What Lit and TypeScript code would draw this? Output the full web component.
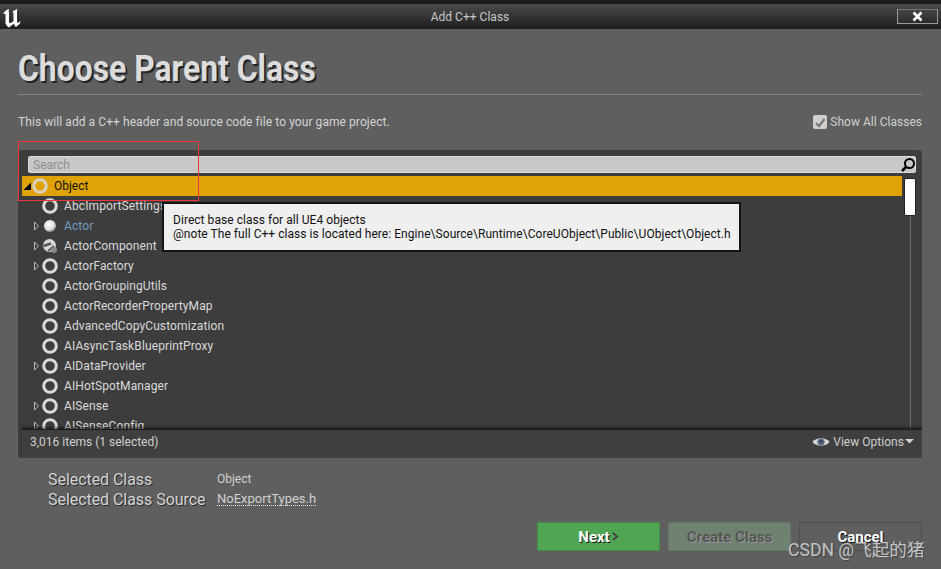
import { LitElement, html, css, svg } from "lit";
import { customElement } from "lit/decorators.js";

const ring = svg`<circle cx="8" cy="8" r="6.3" fill="none" stroke="#dadada" stroke-width="3"/>`;

const rows: { name: string; arrow?: boolean; icon?: string; blue?: boolean }[] = [
  { name: "AbcImportSettings" },
  { name: "Actor", arrow: true, icon: "ball", blue: true },
  { name: "ActorComponent", arrow: true, icon: "comp" },
  { name: "ActorFactory", arrow: true },
  { name: "ActorGroupingUtils" },
  { name: "ActorRecorderPropertyMap" },
  { name: "AdvancedCopyCustomization" },
  { name: "AIAsyncTaskBlueprintProxy" },
  { name: "AIDataProvider", arrow: true },
  { name: "AIHotSpotManager" },
  { name: "AISense", arrow: true },
  { name: "AISenseConfig", arrow: true },
];

@customElement("app-root")
export class AppRoot extends LitElement {
  static styles = css`
    :host {
      display: block;
      position: relative;
      width: 941px;
      height: 569px;
      overflow: hidden;
      background: #5f5f5f;
      font-family: Roboto, "Noto Sans CJK SC", sans-serif;
      font-size: 12px;
      color: #d6d6d6;
    }
    .titlebar {
      height: 29px;
      box-sizing: border-box;
      border-top: 4px solid #1b1b1b;
      background: linear-gradient(#4a4a4a, #1e1e1e);
      display: grid;
      grid-template-columns: 1fr auto 1fr;
      align-items: center;
    }
    .logo { margin: 2px 0 0 2px; display: block; }
    .title { color: #c8c8c8; font-size: 12px; margin-top: 1px; margin-left: -1px; letter-spacing: 0.02px; }
    .close {
      justify-self: end;
      width: 41px;
      height: 15px;
      margin: -1px 3px 0 0;
      box-sizing: border-box;
      border: 1px solid #9a9a9a;
      border-top-color: #777;
      background: linear-gradient(#444, #2c2c2c);
      display: flex;
      align-items: center;
      justify-content: center;
    }
    .content { padding: 0 19px 0 18px; }
    h1 {
      margin: 17px 0 0;
      height: 48px;
      font-size: 36px;
      line-height: 47px;
      font-weight: 700;
      color: #dcdcdc;
      text-shadow: 2px 2px 0 #222;
      transform-origin: left center;
      transform: scaleX(0.885);
      white-space: nowrap;
    }
    .rule { height: 1px; background: #858585; }
    .intro {
      display: flex;
      justify-content: space-between;
      align-items: center;
      height: 20px;
      margin-top: 17px;
      color: #d4d4d4;
    }
    .intro-text { letter-spacing: 0.07px; }
    .show { display: flex; align-items: center; gap: 3px; color: #cfcfcf; letter-spacing: 0.02px; }
    .check {
      width: 14px;
      height: 14px;
      border-radius: 2px;
      background: #cfcfcf;
      display: flex;
    }
    .panel {
      margin-top: 18px;
      height: 308px;
      background: #3d3d3d;
      border-radius: 3px;
      display: flex;
      flex-direction: column;
      overflow: hidden;
    }
    .search {
      margin: 6px 6px 0 10px;
      height: 17px;
      box-sizing: border-box;
      background: #c8c8c8;
      border: 1px solid #dcdcdc;
      border-radius: 2px;
      display: flex;
      align-items: center;
      justify-content: space-between;
      padding-left: 4px;
      color: #8f8f8f;
      font-size: 12px;
    }
    .search svg { margin-right: -1px; }
    .body {
      flex: 1;
      min-height: 0;
      display: flex;
      margin: 3px 6px 0 4px;
      gap: 2px;
      overflow: hidden;
    }
    .tree { flex: 1; min-width: 0; }
    .row {
      height: 20px;
      display: flex;
      align-items: center;
      color: #dadada;
      white-space: nowrap;
      letter-spacing: 0.11px;
    }
    .row.sel { background: #dfa307; color: #111; letter-spacing: 0; }
    .row.sel .arrow { margin-left: 1px; width: 9px; }
    .row.sel .icon { margin: 0 6px 0 0; }
    .row.blue { color: #6f9dc2; }
    .arrow { width: 12px; margin-left: 8px; height: 10px; display: block; flex: none; }
    .icon { width: 16px; height: 16px; margin: 0 6px 0 0; flex: none; display: block; }
    .scroll {
      width: 12px;
      margin-top: 2px;
      display: flex;
      flex-direction: column;
      align-items: center;
    }
    .thumb {
      width: 12px;
      height: 38px;
      box-sizing: border-box;
      background: #fff;
      border: 1px solid #222;
      border-radius: 2px;
      flex: none;
    }
    .track { flex: 1; width: 1px; background: #6a6a6a; }
    .foot {
      height: 29px;
      flex: none;
      margin-left: 4px;
      box-sizing: border-box;
      border-top: 1px solid #1c1c1c;
      box-shadow: 0 -2px 2px rgba(0,0,0,.45);
      background: #3f3f3f;
      position: relative;
      display: flex;
      justify-content: space-between;
      align-items: center;
      padding: 0 8px 5px 8px;
      color: #cfcfcf;
    }
    .view { display: flex; align-items: center; gap: 3px; letter-spacing: 0.03px; }
    .info {
      margin: 11px 0 0 30px;
      display: grid;
      grid-template-columns: 169px auto;
      grid-auto-rows: 20px;
      align-items: center;
      justify-content: start;
    }
    .lab { font-size: 16px; color: #d4d4d4; text-shadow: 1px 1px 0 #2a2a2a; letter-spacing: -0.05px; }
    .val { color: #d0d0d0; }
    .link { border-bottom: 1px dotted #e4e4e4; justify-self: start; line-height: 13px; font-size: 13px; }
    .btns {
      display: flex;
      justify-content: flex-end;
      gap: 8px;
      margin-top: 13px;
    }
    .btn {
      width: 123px;
      height: 29px;
      box-sizing: border-box;
      border: 1px solid #4f4f4f;
      border-radius: 1px;
      display: flex;
      align-items: center;
      justify-content: center;
      gap: 2px;
      font-size: 15px;
      font-weight: 700;
      color: #fff;
      text-shadow: 1px 1px 0 #111;
    }
    .next { background: #50a552; border-color: #3f8e43; }
    .create { background: #6f8170; border-color: #667668; color: #555; text-shadow: 1px 1px 0 #999; }
    .cancel { background: #5f5f5f; }
    .tip {
      position: absolute;
      left: 162px;
      top: 202px;
      width: 579px;
      height: 50px;
      box-sizing: border-box;
      background: #efefef;
      border: 2px solid #141414;
      color: #111;
      padding: 9px;
      line-height: 14px;
      white-space: nowrap;
      letter-spacing: 0.045px;
    }
    .mark {
      position: absolute;
      left: 18px;
      top: 141px;
      width: 181px;
      height: 60px;
      box-sizing: border-box;
      border: 1px solid #f0343c;
      pointer-events: none;
    }
    .wm {
      position: absolute;
      left: 788px;
      top: 540px;
      font-size: 17.6px;
      line-height: 20px;
      color: #c4c4c4;
      white-space: nowrap;
      text-shadow: 1px 1px 0 #444;
    }
  `;

  private arrow(open = false) {
    return open
      ? html`<svg class="arrow" viewBox="0 0 9 10"><path d="M0.5 9 L8 9 L8 1.5 Z" fill="#000"/></svg>`
      : html`<svg class="arrow" viewBox="0 0 12 10"><path d="M4.5 1 L8.5 5 L4.5 9 Z" fill="none" stroke="#b8b8b8" stroke-width="1"/></svg>`;
  }

  private icon(kind?: string) {
    if (kind === "ball")
      return html`<svg class="icon" viewBox="0 0 16 16"><defs><radialGradient id="b" cx=".4" cy=".35" r=".7"><stop offset="0" stop-color="#fff"/><stop offset=".65" stop-color="#ddd"/><stop offset="1" stop-color="#777"/></radialGradient></defs><circle cx="8" cy="8" r="6" fill="url(#b)"/></svg>`;
    if (kind === "comp")
      return html`<svg class="icon" viewBox="0 0 16 16"><circle cx="7.5" cy="7.5" r="6.5" fill="#d8d8d8"/><path d="M1.5 8 L9 5.5" stroke="#555" stroke-width="2.4"/><path d="M6 13 L12 8" stroke="#555" stroke-width="2"/><circle cx="12" cy="12" r="3" fill="#8a8a8a"/></svg>`;
    return html`<svg class="icon" viewBox="0 0 16 16">${ring}</svg>`;
  }

  render() {
    return html`
      <div class="titlebar">
        <svg class="logo" width="20" height="20" viewBox="0 0 20 20">
          <path fill="#fff" d="M1 5.5 C3 3 5 1.5 7 1 L6.5 3 L7 4 L7 13.5 C7 15.5 8.5 15.5 9.5 14.5 L11.5 13 L11.5 5 L10.5 3.5 L15.5 0.8 L15 3 L15 13 C15 15 16 15 16.5 14.5 L19 13 L17.5 16 L14 19 L12.5 17.5 L12 15.5 L7 19.5 L5 18 L3.5 15.5 L3.5 6 Z"/>
        </svg>
        <div class="title">Add C++ Class</div>
        <div class="close">
          <svg width="11" height="11" viewBox="0 0 11 11"><path d="M1.5 1.5 L9.5 9.5 M9.5 1.5 L1.5 9.5" stroke="#fff" stroke-width="2.6"/></svg>
        </div>
      </div>
      <div class="content">
        <h1>Choose Parent Class</h1>
        <div class="rule"></div>
        <div class="intro">
          <span class="intro-text">This will add a C++ header and source code file to your game project.</span>
          <span class="show">
            <span class="check"><svg width="14" height="14" viewBox="0 0 14 14"><path d="M3 8 L6 11 L11.5 4" fill="none" stroke="#7a7a7a" stroke-width="2.4"/></svg></span>
            Show All Classes
          </span>
        </div>
        <div class="panel">
          <div class="search">
            <span>Search</span>
            <svg width="16" height="16" viewBox="0 0 16 16"><circle cx="9.5" cy="6.5" r="4.5" fill="none" stroke="#000" stroke-width="2"/><path d="M6 10 L2 14" stroke="#000" stroke-width="2.6"/></svg>
          </div>
          <div class="body">
            <div class="tree">
              <div class="row sel">
                ${this.arrow(true)}
                <svg class="icon" viewBox="0 0 16 16"><circle cx="8" cy="8" r="6.3" fill="none" stroke="#d8d4c6" stroke-width="3"/></svg>
                Object
              </div>
              ${rows.map(
                (r) => html`<div class="row ${r.blue ? "blue" : ""}">
                  ${r.arrow ? this.arrow() : html`<span class="arrow"></span>`}
                  ${this.icon(r.icon)}
                  ${r.name}
                </div>`
              )}
            </div>
            <div class="scroll">
              <div class="thumb"></div>
              <div class="track"></div>
            </div>
          </div>
          <div class="foot">
            <span>3,016 items (1 selected)</span>
            <span class="view">
              <svg width="18" height="12" viewBox="0 0 18 12"><path d="M0.5 6 C4 1 14 1 17.5 6 C14 11 4 11 0.5 6 Z" fill="#d4d4d4"/><circle cx="9" cy="6" r="3.6" fill="#5b6b88"/><circle cx="9" cy="5.5" r="1.4" fill="#2f3a52"/></svg>
              View Options
              <svg width="9" height="5" viewBox="0 0 9 5" style="margin-left:-2px"><path d="M0 0 L9 0 L4.5 4.5 Z" fill="#cfcfcf"/></svg>
            </span>
          </div>
        </div>
        <div class="info">
          <span class="lab">Selected Class</span><span class="val">Object</span>
          <span class="lab">Selected Class Source</span><span class="val link">NoExportTypes.h</span>
        </div>
        <div class="btns">
          <div class="btn next">Next<svg width="7" height="9" viewBox="0 0 7 9"><path d="M1 1 L5 4.5 L1 8" fill="none" stroke="#444" stroke-width="2"/></svg></div>
          <div class="btn create">Create Class</div>
          <div class="btn cancel">Cancel</div>
        </div>
      </div>
      <div class="tip">Direct base class for all UE4 objects<br />@note The full C++ class is located here: Engine\\Source\\Runtime\\CoreUObject\\Public\\UObject\\Object.h</div>
      <div class="mark"></div>
      <div class="wm">CSDN @飞起的猪</div>
    `;
  }
}
